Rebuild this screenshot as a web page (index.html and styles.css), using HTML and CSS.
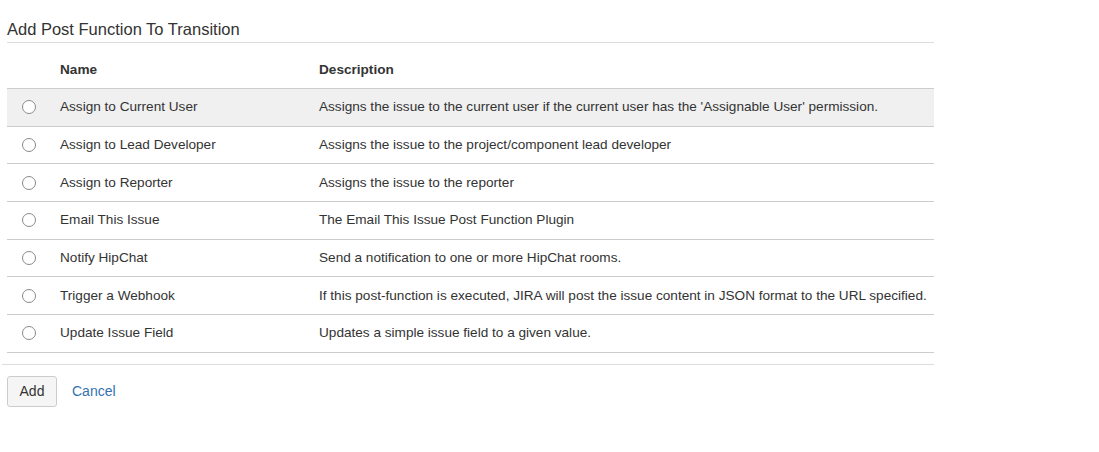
FILE: index.html
```html
<!DOCTYPE html>
<html lang="en">
<head>
    <meta charset="UTF-8">
    <meta name="viewport" content="width=device-width, initial-scale=1.0">
    <title>Add Post Function To Transition</title>
    <link rel="stylesheet" href="styles.css">
</head>
<body>
    <form class="page">
        <h2 class="page-title">Add Post Function To Transition</h2>

        <table class="functions">
            <thead>
                <tr>
                    <th class="col-radio"></th>
                    <th class="col-name">Name</th>
                    <th>Description</th>
                </tr>
            </thead>
            <tbody>
                <tr class="hover">
                    <td class="col-radio"><input type="radio" name="fn"></td>
                    <td class="col-name">Assign to Current User</td>
                    <td>Assigns the issue to the current user if the current user has the 'Assignable User' permission.</td>
                </tr>
                <tr>
                    <td class="col-radio"><input type="radio" name="fn"></td>
                    <td class="col-name">Assign to Lead Developer</td>
                    <td>Assigns the issue to the project/component lead developer</td>
                </tr>
                <tr>
                    <td class="col-radio"><input type="radio" name="fn"></td>
                    <td class="col-name">Assign to Reporter</td>
                    <td>Assigns the issue to the reporter</td>
                </tr>
                <tr>
                    <td class="col-radio"><input type="radio" name="fn"></td>
                    <td class="col-name">Email This Issue</td>
                    <td>The Email This Issue Post Function Plugin</td>
                </tr>
                <tr>
                    <td class="col-radio"><input type="radio" name="fn"></td>
                    <td class="col-name">Notify HipChat</td>
                    <td>Send a notification to one or more HipChat rooms.</td>
                </tr>
                <tr>
                    <td class="col-radio"><input type="radio" name="fn"></td>
                    <td class="col-name">Trigger a Webhook</td>
                    <td>If this post-function is executed, JIRA will post the issue content in JSON format to the URL specified.</td>
                </tr>
                <tr>
                    <td class="col-radio"><input type="radio" name="fn"></td>
                    <td class="col-name">Update Issue Field</td>
                    <td>Updates a simple issue field to a given value.</td>
                </tr>
            </tbody>
        </table>

        <!-- buttons -->
        <div class="buttons">
            <button type="button" class="btn">Add</button>
            <a href="javascript:;" class="cancel">Cancel</a>
        </div>
    </form>
</body>
</html>
```

FILE: styles.css
```css
* {
    margin: 0;
    padding: 0;
    box-sizing: border-box;
}

body {
    font-family: "Liberation Sans", Arial, sans-serif;
    font-size: 13.6px;
    color: #333;
    background: #fff;
}

.page {
    width: 934px;
    padding-left: 7px;
    padding-top: 19px;
}

.page-title {
    font-size: 16.5px;
    font-weight: normal;
    line-height: 20px;
    padding-bottom: 3px;
    border-bottom: 1px solid #ddd;
}

/* table */

.functions {
    width: 100%;
    border-collapse: collapse;
}

.functions th {
    text-align: left;
    font-weight: bold;
    line-height: 20px;
    padding: 17px 0 8px;
    border-bottom: 1px solid #ccc;
}

.functions td {
    height: 37.7px;
    line-height: 20px;
    padding: 0;
    white-space: nowrap;
    border-bottom: 1px solid #ccc;
    vertical-align: middle;
}

.functions tr.hover td {
    background-color: #f0f0f0;
}

.col-radio {
    width: 53px;
}

.col-name {
    width: 259px;
}

.col-radio input {
    display: block;
    appearance: none;
    width: 14px;
    height: 14px;
    margin: 0 0 0 15px;
    border: 1px solid #8a8a8a;
    border-radius: 50%;
    background-color: #fff;
}

/* buttons */

.buttons {
    display: flex;
    align-items: center;
    gap: 15px;
    margin-left: -5px;
    margin-top: 11px;
    padding: 11px 0 0 5px;
    border-top: 1px solid #ddd;
}

.btn {
    width: 50px;
    height: 31px;
    font-family: inherit;
    font-size: 14px;
    color: #333;
    background-color: #f5f5f5;
    border: 1px solid #ccc;
    border-radius: 3px;
}

.cancel {
    color: #3572b0;
    font-size: 14px;
    text-decoration: none;
}
```
